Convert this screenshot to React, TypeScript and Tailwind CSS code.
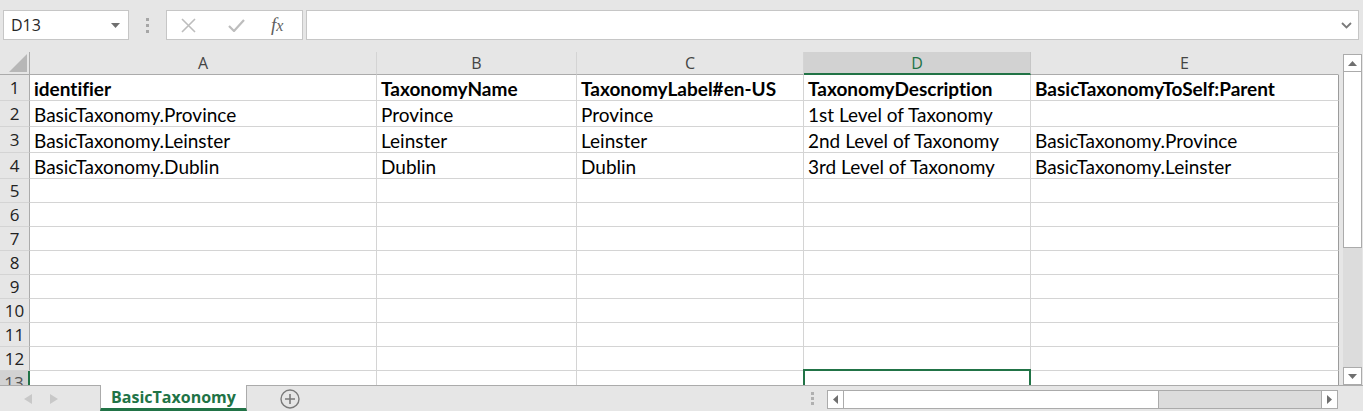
import React from 'react'

const COLS = [
  { key: 'A', width: 'w-[347px]' },
  { key: 'B', width: 'w-[200px]' },
  { key: 'C', width: 'w-[227px]' },
  { key: 'D', width: 'w-[227px]' },
  { key: 'E', width: 'w-[308px]' },
]

const DATA: string[][] = [
  ['identifier', 'TaxonomyName', 'TaxonomyLabel#en-US', 'TaxonomyDescription', 'BasicTaxonomyToSelf:Parent'],
  ['BasicTaxonomy.Province', 'Province', 'Province', '1st Level of Taxonomy', ''],
  ['BasicTaxonomy.Leinster', 'Leinster', 'Leinster', '2nd Level of Taxonomy', 'BasicTaxonomy.Province'],
  ['BasicTaxonomy.Dublin', 'Dublin', 'Dublin', '3rd Level of Taxonomy', 'BasicTaxonomy.Leinster'],
]

const ROWS = Array.from({ length: 13 }, (_, i) => i + 1)

function FormulaBar() {
  return (
    <div className="flex h-[52px] shrink-0 items-start gap-0 pt-[10px] pl-[3px]">
      {/* name box */}
      <div className="flex h-[30px] w-[126px] items-center justify-between border border-[#c6c6c6] bg-white pl-[7px] pr-[8px]">
        <span className="text-[16px] text-[#262626] [font-family:'Open_Sans',sans-serif]">D13</span>
        <svg width="9" height="5" viewBox="0 0 9 5">
          <path d="M0 0h9L4.5 5z" fill="#6f6f6f" />
        </svg>
      </div>
      {/* grip */}
      <div className="ml-[17px] mr-[17px] flex h-[30px] flex-col justify-center gap-[3px]">
        <div className="h-[3px] w-[3px] bg-[#a6a6a6]" />
        <div className="h-[3px] w-[3px] bg-[#a6a6a6]" />
        <div className="h-[3px] w-[3px] bg-[#a6a6a6]" />
      </div>
      {/* cancel / enter / fx */}
      <div className="flex h-[30px] w-[137px] items-center border border-[#c6c6c6] bg-white">
        <svg className="ml-[14px]" width="15" height="15" viewBox="0 0 15 15">
          <path d="M1 1l13 13M14 1L1 14" stroke="#bdbdbd" strokeWidth="1.6" />
        </svg>
        <svg className="ml-[32px]" width="17" height="13" viewBox="0 0 17 13">
          <path d="M1 7l5 5L16 1" stroke="#bdbdbd" strokeWidth="2.2" fill="none" />
        </svg>
        <span className="ml-[26px] text-[19px] italic text-[#5f5f5f] [font-family:'Liberation_Serif',serif]">
          f<span className="text-[16px]">x</span>
        </span>
      </div>
      {/* formula input */}
      <div className="ml-[3px] flex h-[30px] w-[1053px] items-center justify-end border border-[#c6c6c6] bg-white pr-[6px]">
        <svg width="11" height="7" viewBox="0 0 11 7">
          <path d="M1 1l4.5 4.5L10 1" stroke="#7a7a7a" strokeWidth="1.8" fill="none" />
        </svg>
      </div>
    </div>
  )
}

function rowHeight(r: number) {
  return r <= 4 ? 'h-[26px]' : 'h-[24px]'
}

function Grid() {
  return (
    <div className="flex w-[1339px] flex-col overflow-hidden">
      {/* column headers */}
      <div className="flex h-[23px] shrink-0">
        <div className="flex w-[30px] items-end justify-end border-r border-b border-[#ababab] bg-[#e6e6e6] pr-[2px] pb-[2px]">
          <svg width="18" height="18" viewBox="0 0 18 18">
            <path d="M18 0V18H0z" fill="#b7b7b7" />
          </svg>
        </div>
        {COLS.map((c, i) => {
          const selected = c.key === 'D'
          const last = i === COLS.length - 1
          return (
            <div
              key={c.key}
              className={`${c.width} flex shrink-0 items-center justify-center border-r text-[16px] [font-family:'Open_Sans',sans-serif] ${
                selected
                  ? 'border-b-2 border-r-[#c6c6c6] border-b-[#217346] bg-[#d2d2d2] text-[#217346]'
                  : 'border-b border-r-[#d4d4d4] border-b-[#ababab] bg-[#e6e6e6] text-[#444]'
              } ${last ? 'border-r-transparent' : ''}`}
            >
              {c.key}
            </div>
          )
        })}
      </div>
      {ROWS.map((r) => {
        const selectedRow = r === 13
        return (
          <div key={r} className={`flex shrink-0 ${rowHeight(r)}`}>
            <div
              className={`flex w-[30px] shrink-0 items-center justify-center border-b border-b-[#d4d4d4] text-[17px] [font-family:'Open_Sans',sans-serif] ${
                selectedRow
                  ? 'border-r-2 border-r-[#217346] bg-[#d2d2d2] text-[#555]'
                  : 'border-r border-r-[#ababab] bg-[#e6e6e6] text-[#222]'
              }`}
            >
              {r}
            </div>
            {COLS.map((c, ci) => {
              const text = DATA[r - 1]?.[ci] ?? ''
              const last = ci === COLS.length - 1
              const active = r === 13 && c.key === 'D'
              return (
                <div
                  key={c.key}
                  className={`${c.width} relative flex shrink-0 items-center overflow-visible whitespace-nowrap border-r border-b border-b-[#d4d4d4] bg-white pt-[1px] pl-[4px] text-[19px] leading-none text-black [font-variant-ligatures:none] [font-family:Lato,'Liberation_Sans',sans-serif] ${
                    last ? 'border-r-[#9b9b9b]' : 'border-r-[#d4d4d4]'
                  } ${r === 1 ? 'font-bold' : ''}`}
                >
                  {text}
                  {active && (
                    <div className="absolute -top-[2px] -left-[1px] -right-[1px] h-[40px] border-2 border-[#217346]" />
                  )}
                </div>
              )
            })}
          </div>
        )
      })}
    </div>
  )
}

function VScroll() {
  return (
    <div className="flex w-[24px] shrink-0 flex-col pt-[2px] pl-[4px] pr-[1px]">
      <div className="flex h-[18px] items-center justify-center border border-[#ababab] bg-white">
        <svg width="9" height="5" viewBox="0 0 9 5">
          <path d="M4.5 0L9 5H0z" fill="#6f6f6f" />
        </svg>
      </div>
      <div className="h-[176px] border-x border-b border-[#ababab] bg-white" />
      <div className="flex-1 bg-[#dcdcdc]" />
      <div className="flex h-[18px] items-center justify-center border border-[#ababab] bg-white">
        <svg width="9" height="5" viewBox="0 0 9 5">
          <path d="M0 0h9L4.5 5z" fill="#6f6f6f" />
        </svg>
      </div>
    </div>
  )
}

function TabBar() {
  return (
    <div className="flex h-[26px] shrink-0 border-t border-[#ababab]">
      <div className="flex w-[100px] items-center gap-[18px] pl-[24px]">
        <svg width="8" height="10" viewBox="0 0 8 10">
          <path d="M8 0V10L0 5z" fill="#c8c8c8" />
        </svg>
        <svg width="8" height="10" viewBox="0 0 8 10">
          <path d="M0 0V10L8 5z" fill="#c8c8c8" />
        </svg>
      </div>
      <div className="-mt-px flex w-[147px] items-center justify-center border-x border-b-[3px] border-x-[#ababab] border-b-[#217346] bg-white text-[16px] font-bold text-[#217346] [font-family:'Open_Sans',sans-serif]">
        BasicTaxonomy
      </div>
      <div className="ml-[33px] flex items-center">
        <svg width="20" height="20" viewBox="0 0 20 20">
          <circle cx="10" cy="10" r="9" fill="none" stroke="#7a7a7a" strokeWidth="1.4" />
          <path d="M10 5v10M5 10h10" stroke="#7a7a7a" strokeWidth="1.6" />
        </svg>
      </div>
      <div className="ml-[511px] flex flex-col justify-center gap-[2px]">
        <div className="h-[3px] w-[3px] bg-[#b0b0b0]" />
        <div className="h-[3px] w-[3px] bg-[#b0b0b0]" />
        <div className="h-[3px] w-[3px] bg-[#b0b0b0]" />
      </div>
      <div className="ml-[13px] mt-[4px] flex h-[19px] w-[511px] border border-[#ababab] bg-[#dcdcdc]">
        <div className="flex w-[16px] items-center justify-center border-r border-[#ababab] bg-white">
          <svg width="5" height="9" viewBox="0 0 5 9">
            <path d="M5 0V9L0 4.5z" fill="#6f6f6f" />
          </svg>
        </div>
        <div className="w-[315px] border-r border-[#ababab] bg-white" />
        <div className="flex-1" />
        <div className="flex w-[16px] items-center justify-center border-l border-[#ababab] bg-white">
          <svg width="5" height="9" viewBox="0 0 5 9">
            <path d="M0 0V9L5 4.5z" fill="#6f6f6f" />
          </svg>
        </div>
      </div>
    </div>
  )
}

export default function App() {
  return (
    <div className="flex h-[411px] w-[1363px] flex-col overflow-hidden bg-[#e6e6e6]">
      <FormulaBar />
      <div className="flex h-[333px] shrink-0 overflow-hidden">
        <Grid />
        <VScroll />
      </div>
      <TabBar />
    </div>
  )
}
